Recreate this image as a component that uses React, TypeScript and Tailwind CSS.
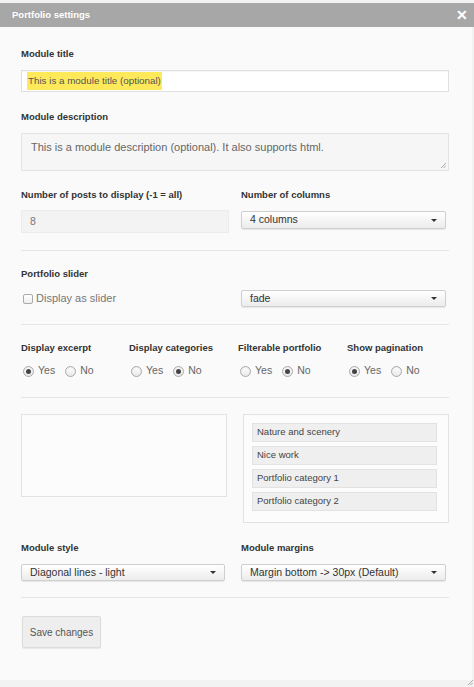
import type { ReactNode } from "react";

const FONT = "font-['Liberation_Sans',Arial,sans-serif]";

function Label({ children }: { children: ReactNode }) {
  return (
    <div className="h-4 text-[9.5px] font-bold leading-4 text-[#333]">
      {children}
    </div>
  );
}

function Select({ value, className = "" }: { value: string; className?: string }) {
  return (
    <div
      className={`flex h-[17px] items-center justify-between rounded-[2px] border border-[#cfcfcf] bg-gradient-to-b from-white to-[#ececec] pl-2 pr-2 text-[10.5px] text-[#333] shadow-[0_1px_1px_rgba(0,0,0,0.08)] ${className}`}
    >
      <span>{value}</span>
      <span className="h-0 w-0 border-x-[3px] border-t-[3px] border-x-transparent border-t-[#333]" />
    </div>
  );
}

function Radio({ checked }: { checked: boolean }) {
  return (
    <span className="flex h-[11px] w-[11px] items-center justify-center rounded-full border border-[#aaa] bg-gradient-to-b from-white to-[#e8e8e8] shadow-[inset_0_1px_1px_rgba(0,0,0,0.08)]">
      {checked && <span className="h-[5px] w-[5px] rounded-full bg-[#444]" />}
    </span>
  );
}

function YesNo({ yes }: { yes: boolean }) {
  return (
    <div className="flex h-4 items-center gap-1 text-[10.5px] text-[#666]">
      <Radio checked={yes} />
      <span>Yes</span>
      <span className="w-0.5" />
      <Radio checked={!yes} />
      <span>No</span>
    </div>
  );
}

function Divider({ className = "" }: { className?: string }) {
  return <div className={`h-px bg-[#e6e6e6] ${className}`} />;
}

const categories = [
  "Nature and scenery",
  "Nice work",
  "Portfolio category 1",
  "Portfolio category 2",
];

const toggles: [string, boolean][] = [
  ["Display excerpt", true],
  ["Display categories", false],
  ["Filterable portfolio", false],
  ["Show pagination", true],
];

export default function App() {
  return (
    <div className={`${FONT} min-h-[687px] w-[474px] bg-[#f2f2f2] pt-[3px]`}>
      <div className="relative w-[472px] bg-[#fafafa] pb-8 pl-[3px]">
        <div className="-ml-[3px] flex h-6 w-[474px] items-center justify-between bg-[#a7a7a7] pl-3 pr-[6px]">
          <span className="text-[9.5px] font-bold text-white">
            Portfolio settings
          </span>
          <span className="text-[14px] font-bold leading-none text-white">
            ✕
          </span>
        </div>

        <div className="ml-[18px] w-[428px] pt-[19px]">
          <Label>Module title</Label>
          <div className="mt-2 flex h-[22px] items-center border border-[#e0e0e0] bg-white px-[5px] shadow-[inset_0_1px_1px_rgba(0,0,0,0.04)]">
            <span className="bg-[#fde95a] px-px text-[9.8px] leading-[18px] text-[#555]">
              This is a module title (optional)
            </span>
          </div>

          <div className="mt-[17px]">
            <Label>Module description</Label>
          </div>
          <div className="relative mt-2 h-[38px] border border-[#e3e3e3] bg-[#f6f6f6] px-[9px] pt-[5px] text-[11px] leading-4 text-[#666]">
            This is a module description (optional). It also supports html.
            <svg
              className="absolute bottom-[2px] right-[2px]"
              width="6"
              height="6"
              viewBox="0 0 6 6"
            >
              <path d="M1 6 L6 1 M3.5 6 L6 3.5" stroke="#999" strokeWidth="0.8" />
            </svg>
          </div>

          <div className="mt-4 grid grid-cols-2 gap-x-3">
            <div>
              <Label>Number of posts to display (-1 = all)</Label>
              <div className="mt-[7px] flex h-[23px] items-center border border-[#ececec] bg-[#f3f3f3] px-2 text-[10.5px] text-[#777]">
                8
              </div>
            </div>
            <div>
              <Label>Number of columns</Label>
              <Select value="4 columns" className="mt-2 mr-[3px] h-[18px]" />
            </div>
          </div>

          <Divider className="mt-[17px]" />

          <div className="mt-[15px]">
            <Label>Portfolio slider</Label>
          </div>
          <div className="mt-2 grid grid-cols-2 gap-x-3">
            <div className="flex h-[17px] items-center gap-[3px] pl-[2px] text-[11px] text-[#777]">
              <span className="h-[10px] w-[10px] rounded-[2px] border border-[#aaa] bg-gradient-to-b from-white to-[#eee]" />
              Display as slider
            </div>
            <Select value="fade" className="mr-[3px]" />
          </div>

          <Divider className="mt-[17px]" />

          <div className="mt-[15px] grid grid-cols-[108px_109px_109px_1fr]">
            {toggles.map(([label, yes]) => (
              <div key={label}>
                <Label>{label}</Label>
                <div className="mt-[7px] pl-[2px]">
                  <YesNo yes={yes} />
                </div>
              </div>
            ))}
          </div>

          <Divider className="mt-[18px]" />

          <div className="mt-4 grid grid-cols-[206px_1fr] gap-x-4 items-start">
            <div className="h-[83px] border border-[#e3e3e3] bg-[#fcfcfc]" />
            <div className="flex flex-col gap-1 border border-[#e3e3e3] bg-[#fcfcfc] pl-2 pr-[11px] pt-2 pb-[11px]">
              {categories.map((c) => (
                <div
                  key={c}
                  className="flex h-[19px] items-center border border-[#e2e2e2] bg-[#efefef] px-1 text-[9.5px] text-[#444]"
                >
                  {c}
                </div>
              ))}
            </div>
          </div>

          <div className="mt-[17px] grid grid-cols-2 gap-x-3">
            <div>
              <Label>Module style</Label>
              <Select value="Diagonal lines - light" className="mt-2 mr-1" />
            </div>
            <div>
              <Label>Module margins</Label>
              <Select
                value="Margin bottom -> 30px (Default)"
                className="mt-2 mr-[3px]"
              />
            </div>
          </div>

          <Divider className="mt-4" />

          <button className="ml-px mt-[18px] flex h-8 w-[79px] items-center justify-center rounded-[2px] border border-[#dcdcdc] bg-[#eeeeee] text-[10px] text-[#555] shadow-[0_1px_1px_rgba(0,0,0,0.08)]">
            Save changes
          </button>
        </div>
        <svg
          className="absolute bottom-[-5px] right-[-1px]"
          width="6"
          height="6"
          viewBox="0 0 6 6"
        >
          <path d="M1 6 L6 1 M3.5 6 L6 3.5" stroke="#999" strokeWidth="0.8" />
        </svg>
      </div>
    </div>
  );
}
